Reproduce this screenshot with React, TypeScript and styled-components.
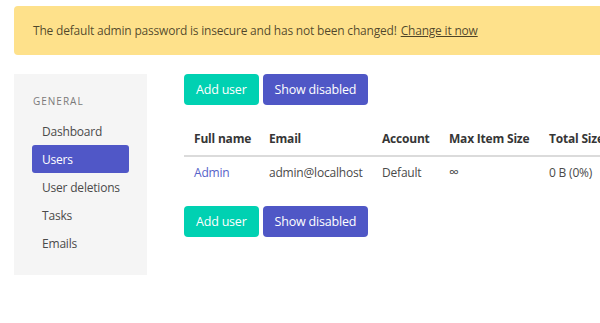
import React from "react";
import styled, { createGlobalStyle } from "styled-components";

const Global = createGlobalStyle`
  html, body { margin: 0; padding: 0; background: #ffffff; overflow: hidden; }
  body { font-family: "Open Sans", "Noto Sans", sans-serif; font-size: 12px; letter-spacing: -0.2px; color: #4a4a4a; }
  * { box-sizing: border-box; }
`;

const Page = styled.div`
  width: 680px;
  padding: 6px 0 0 14px;
`;

const Notification = styled.div`
  height: 49px;
  display: flex;
  align-items: center;
  padding: 0 19px;
  background: #fee18b;
  border-radius: 4px;
  color: rgba(0, 0, 0, 0.7);
  font-size: 12px;
`;

const NoticeLink = styled.a`
  color: inherit;
  text-decoration: underline;
  margin-left: 4px;
  cursor: pointer;
`;

const Columns = styled.div`
  display: flex;
  align-items: flex-start;
  gap: 37px;
  margin-top: 19px;
`;

const Sidebar = styled.aside`
  width: 133px;
  flex: none;
  background: #f5f5f5;
  padding: 20px 18px 18px 18px;
`;

const MenuLabel = styled.p`
  margin: 0 0 9px 1px;
  font-size: 10px;
  line-height: 14px;
  letter-spacing: 1px;
  text-transform: uppercase;
  color: #7a7a7a;
`;

const MenuList = styled.ul`
  list-style: none;
  margin: 0;
  padding: 0;
`;

const MenuItem = styled.li<{ $active?: boolean }>`
  height: 28px;
  display: flex;
  align-items: center;
  padding: 0 10px;
  border-radius: 3px;
  background: ${(p) => (p.$active ? "#5057c7" : "transparent")};
  color: ${(p) => (p.$active ? "#ffffff" : "#4a4a4a")};
  white-space: nowrap;
`;

const Main = styled.main`
  flex: 1;
  min-width: 0;
`;

const Buttons = styled.div`
  display: flex;
  gap: 4px;
`;

const Button = styled.button<{ $kind: "primary" | "link" }>`
  height: 31px;
  padding: 0 12px;
  border: none;
  border-radius: 4px;
  font-family: inherit;
  font-size: 12.5px;
  letter-spacing: -0.2px;
  color: #ffffff;
  background: ${(p) => (p.$kind === "primary" ? "#00d1b2" : "#4f57c6")};
  cursor: pointer;
`;

const Table = styled.table`
  margin: 16px 0 16px;
  border-collapse: collapse;
  table-layout: fixed;
  width: 480px;
`;

const Th = styled.th`
  text-align: left;
  font-weight: 700;
  color: #363636;
  padding: 8px 10px 6px;
  line-height: 20px;
  border-bottom: 2px solid #dbdbdb;
  white-space: nowrap;
`;

const Td = styled.td`
  padding: 5px 10px 7px;
  line-height: 20px;
  color: #4a4a4a;
  white-space: nowrap;
`;

const Infinity = styled.span`
  font-size: 14px;
`;

const NameLink = styled.a`
  color: #5662c9;
  text-decoration: none;
`;

const cols = [75, 113, 67, 100, 125];

const Actions = () => (
  <Buttons>
    <Button $kind="primary">Add user</Button>
    <Button $kind="link">Show disabled</Button>
  </Buttons>
);

export default function App() {
  const menu = ["Dashboard", "Users", "User deletions", "Tasks", "Emails"];
  return (
    <Page>
      <Global />
      <Notification>
        The default admin password is insecure and has not been changed!
        <NoticeLink>Change it now</NoticeLink>
      </Notification>
      <Columns>
        <Sidebar>
          <MenuLabel>General</MenuLabel>
          <MenuList>
            {menu.map((m) => (
              <MenuItem key={m} $active={m === "Users"}>
                {m}
              </MenuItem>
            ))}
          </MenuList>
        </Sidebar>
        <Main>
          <Actions />
          <Table>
            <colgroup>
              {cols.map((w, i) => (
                <col key={i} style={{ width: w }} />
              ))}
            </colgroup>
            <thead>
              <tr>
                <Th>Full name</Th>
                <Th>Email</Th>
                <Th>Account</Th>
                <Th>Max Item Size</Th>
                <Th>Total Size</Th>
              </tr>
            </thead>
            <tbody>
              <tr>
                <Td>
                  <NameLink>Admin</NameLink>
                </Td>
                <Td>admin@localhost</Td>
                <Td>Default</Td>
                <Td>
                  <Infinity>∞</Infinity>
                </Td>
                <Td>0 B (0%)</Td>
              </tr>
            </tbody>
          </Table>
          <Actions />
        </Main>
      </Columns>
    </Page>
  );
}
